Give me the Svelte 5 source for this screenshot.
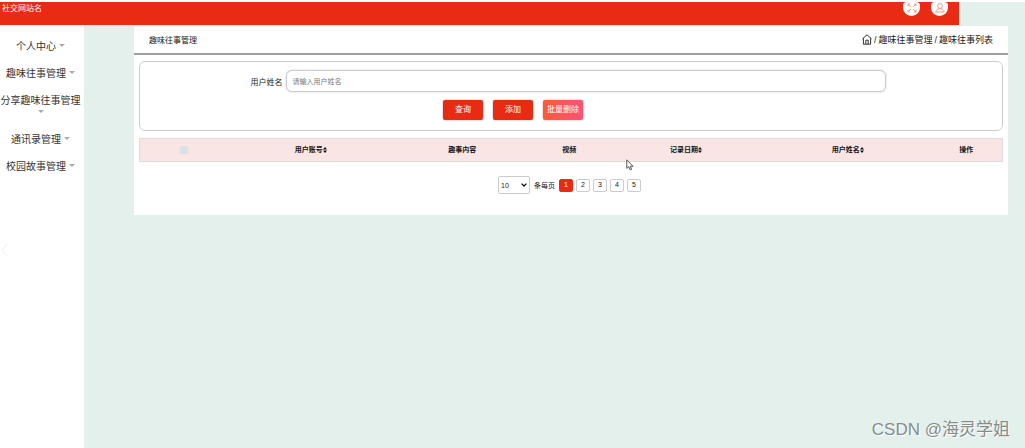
<script>
	const menus = ['个人中心', '趣味往事管理', '分享趣味往事管理', '通讯录管理', '校园故事管理'];

	// 表头，width 为列宽百分比
	const columns = [
		{ name: '用户账号', width: 19.2, sortable: true },
		{ name: '趣事内容', width: 16 },
		{ name: '视频', width: 8.8 },
		{ name: '记录日期', width: 18.3, sortable: true },
		{ name: '用户姓名', width: 19.2, sortable: true },
		{ name: '操作', width: 8.3 }
	];

	const pages = [1, 2, 3, 4, 5];
	let current = 1;
	let pageSize = '10';
	let userName = '';
	let checkAll = false;
</script>

<div class="page">
	<header class="navbar">
		<a class="navbar__brand" href="#home">社交网站名</a>
		<div class="navbar__tools">
			<button class="navbar__tool" aria-label="全屏">
				<svg viewBox="0 0 16 16" width="16" height="16">
					<path d="M4 6V4h2M10 4h2v2M12 10v2h-2M6 12H4v-2M4 4l3 3M12 4L9 7M12 12L9 9M4 12l3-3" />
				</svg>
			</button>
			<button class="navbar__tool" aria-label="用户">
				<svg viewBox="0 0 16 16" width="16" height="16">
					<circle cx="8" cy="6" r="2.4" />
					<path d="M3.8 12c0-4.4 8.4-4.4 8.4 0z" />
				</svg>
			</button>
		</div>
	</header>

	<div class="layout">
		<nav class="sidebar">
			{#each menus as menu}
				<a class="sidebar__item" href="#menu">{menu} <svg class="caret" viewBox="0 0 6 4" width="6" height="4"><path d="M0 0h6L3 3z" /></svg></a>
			{/each}
			<svg class="sidebar__fold" viewBox="0 0 8 14" width="8" height="14"><path d="M7 1L2 7l5 6" /></svg>
		</nav>

		<main class="content">
			<section class="content__head">
				<h1>趣味往事管理</h1>
				<div class="breadcrumb">
					<a href="#home" aria-label="首页">
						<svg viewBox="0 0 10 11" width="10" height="11">
							<path d="M.5 4.8L5 .8l4.5 4M1.4 4.2v6h7.2v-6M3.8 10V6.2h2.4V10" />
						</svg>
					</a>
					<span>/</span>
					<a href="#manage">趣味往事管理</a>
					<span>/</span>
					<span>趣味往事列表</span>
				</div>
			</section>

			<form class="search" on:submit|preventDefault>
				<div class="search__row">
					<label for="userName">用户姓名</label>
					<input id="userName" type="text" placeholder="请输入用户姓名" bind:value={userName} />
				</div>
				<div class="search__buttons">
					<button type="submit">查询</button>
					<button type="button">添加</button>
					<button type="button" class="delete">批量删除</button>
				</div>
			</form>

			<table class="list">
				<thead>
					<tr>
						<th style="width: 10.2%"><input type="checkbox" aria-label="全选" bind:checked={checkAll} /></th>
						{#each columns as column}
							<th style="width: {column.width}%">
								{column.name}{#if column.sortable}<svg class="sort" viewBox="0 0 4 6" width="4" height="6"><path d="M0 2.5L2 0l2 2.5zM0 3.5h4L2 6z" /></svg>{/if}
							</th>
						{/each}
					</tr>
				</thead>
			</table>

			<div class="pager">
				<div class="pager__size">
					<select id="pageSize" bind:value={pageSize}>
						<option>10</option>
						<option>25</option>
						<option>50</option>
					</select>
					<svg viewBox="0 0 6 4" width="6" height="4"><path d="M.6.6L3 3 5.4.6" /></svg>
				</div>
				<label for="pageSize">条每页</label>
				<div class="pager__pages">
					{#each pages as page}
						<button class:active={page === current} on:click={() => (current = page)}>{page}</button>
					{/each}
				</div>
			</div>
			<svg class="pointer" viewBox="0 0 8 12" width="8" height="12"><path d="M.8.8v8.6l2-1.8L4.2 11l1.5-.7-1.4-3H7z" /></svg>
		</main>
	</div>
	<span class="watermark">CSDN @海灵学姐</span>
</div>

<style>
	:global(body) {
		margin: 0;
		background: #e4f0ec;
	}
	.page {
		position: relative;
		display: flex;
		flex-direction: column;
		box-sizing: border-box;
		min-height: 100vh;
		border-top: 2px solid #fff;
		font-family: "Liberation Sans", "Noto Sans CJK SC", sans-serif;
		font-size: 8px;
		color: #222;
	}
	a {
		color: inherit;
		text-decoration: none;
	}
	button, input, select {
		box-sizing: border-box;
		margin: 0;
		font-family: inherit;
	}
	.navbar {
		display: flex;
		justify-content: space-between;
		align-items: flex-start;
		height: 23px;
		margin-right: 66px;
		background: #e92b14;
	}
	.navbar__brand {
		padding: 1px 2px;
		line-height: 12px;
		color: #fff;
	}
	.navbar__tools {
		display: flex;
		gap: 11px;
		padding-right: 11px;
	}
	.navbar__tool {
		display: flex;
		justify-content: center;
		align-items: flex-end;
		width: 17px;
		height: 14px;
		padding: 0;
		overflow: hidden;
		border: none;
		border-radius: 4px 4px 9px 9px;
		background: #fff;
	}
	.navbar__tool svg {
		flex-shrink: 0;
		fill: none;
		stroke: #f29a8c;
	}
	.layout {
		display: flex;
		flex: 1;
		align-items: flex-start;
	}
	.sidebar {
		position: relative;
		align-self: stretch;
		flex-shrink: 0;
		box-sizing: border-box;
		width: 84px;
		padding: 16px 3px 0 0;
		background: #fff;
	}
	.sidebar__item {
		display: block;
		margin-bottom: 15px;
		text-align: center;
		font-size: 10px;
		line-height: 12px;
		color: #333;
	}
	.caret {
		vertical-align: 2px;
		fill: #aaa;
	}
	.sidebar__fold {
		position: absolute;
		top: 218px;
		left: 0;
		fill: none;
		stroke: #eee;
	}
	.content {
		position: relative;
		flex: 1;
		min-width: 0;
		box-sizing: border-box;
		margin: 1px 17px 0 50px;
		padding-bottom: 21px;
		background: #fff;
	}
	.content__head {
		display: flex;
		justify-content: space-between;
		align-items: center;
		height: 27px;
		padding: 0 15px;
		border-bottom: 2px solid #a0a0a0;
	}
	.content__head h1 {
		margin: 0;
		font-size: 8px;
		font-weight: 400;
	}
	.breadcrumb {
		display: flex;
		align-items: center;
		gap: 2px;
		font-size: 9px;
	}
	.breadcrumb a {
		display: flex;
	}
	.breadcrumb svg {
		fill: none;
		stroke: #333;
	}
	.search {
		margin: 6px 5px 7px;
		padding: 8px 0 10px;
		border: 1px solid #ccc;
		border-radius: 6px;
	}
	.search__row {
		display: flex;
		justify-content: center;
		align-items: center;
		gap: 4px;
		padding-right: 6px;
	}
	.search__row input {
		width: 70%;
		height: 22px;
		padding: 0 5px;
		border: 1px solid #ccc;
		border-radius: 6px;
		box-shadow: 0 0 2px #ccc;
		font-size: 7px;
		outline: none;
	}
	.search__row input::placeholder {
		color: #777;
	}
	.search__buttons {
		display: flex;
		justify-content: center;
		gap: 10px;
		margin-top: 8px;
		padding-right: 116px;
	}
	.search__buttons button {
		width: 40px;
		height: 20px;
		padding: 0;
		border: none;
		border-radius: 2px;
		background: #e92b14;
		box-shadow: 0 0 2px #99a;
		font-size: 8px;
		line-height: 18px;
		color: #fff;
	}
	.search__buttons .delete {
		background: linear-gradient(90deg, #ff5a36, #ff5277);
	}
	.list {
		width: calc(100% - 10px);
		margin: 0 5px;
		border: 1px solid #ddd;
		border-collapse: collapse;
		table-layout: fixed;
		background: #f9e6e4;
	}
	.list th {
		height: 22px;
		padding: 0;
		font-size: 7px;
		line-height: 10px;
		color: #111;
	}
	.list input {
		appearance: none;
		display: block;
		width: 8px;
		height: 8px;
		margin: 0 auto;
		background: #d8e2e6;
	}
	.sort {
		fill: #111;
		vertical-align: -1px;
	}
	.pager {
		display: flex;
		justify-content: center;
		align-items: center;
		gap: 4px;
		margin-top: 14px;
		padding-right: 3px;
		font-size: 7px;
	}
	.pager__size {
		position: relative;
		display: flex;
	}
	.pager__size svg {
		position: absolute;
		top: 7px;
		right: 3px;
		fill: none;
		stroke: #111;
		stroke-width: 1.3;
		pointer-events: none;
	}
	.pager select {
		appearance: none;
		width: 32px;
		height: 18px;
		padding: 0 2px;
		border: 1px solid #ccc;
		border-radius: 2px;
		background: #fff;
		font-size: 7px;
		color: #222;
	}
	.pager__pages {
		display: flex;
		gap: 3px;
	}
	.pager__pages button {
		width: 14px;
		height: 13px;
		padding: 0;
		border: 1px solid #ccc;
		border-radius: 2px;
		background: #fff;
		font-size: 7px;
		line-height: 10px;
		color: #222;
	}
	.pager__pages .active {
		border-color: #e92b14;
		background: #e92b14;
		color: #fff;
	}
	.pointer {
		position: absolute;
		top: 133px;
		left: 492px;
		fill: #fff;
		stroke: #555;
	}
	.watermark {
		position: absolute;
		right: 15px;
		bottom: 6px;
		font-size: 17px;
		line-height: 24px;
		color: #858c8a;
		text-shadow: 1px 1px 0 #fff;
	}
</style>
